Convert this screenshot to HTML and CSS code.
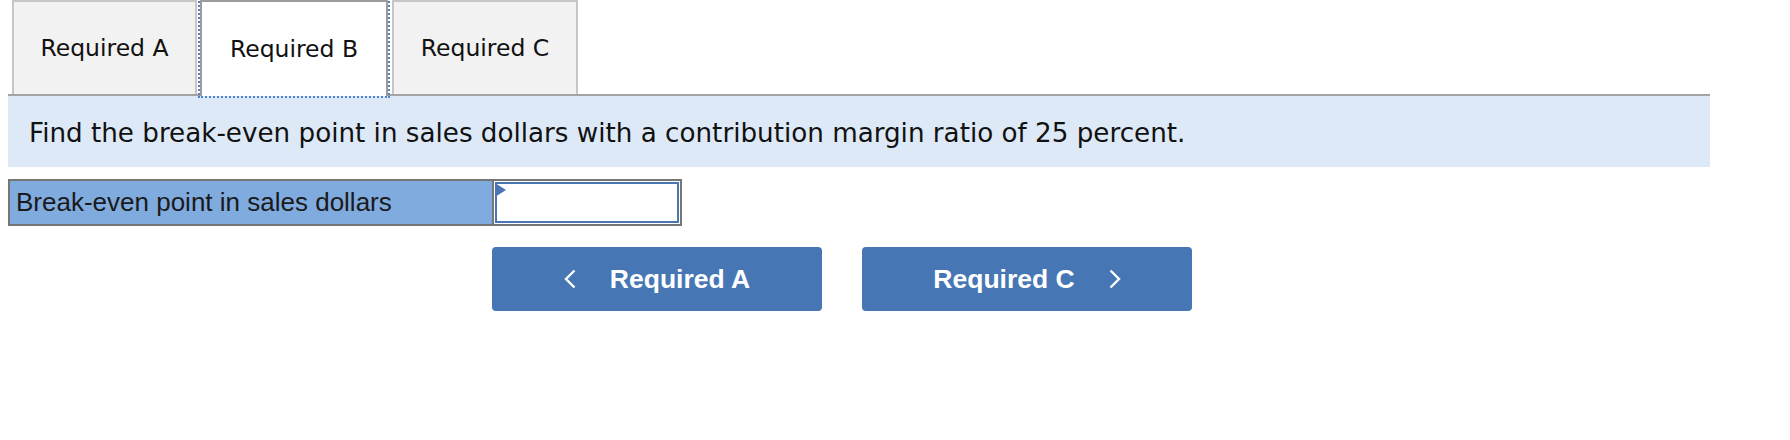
FILE: index.html
```html
<!DOCTYPE html>
<html lang="en">
<head>
<meta charset="utf-8">
<title>Required B</title>
<link rel="stylesheet" href="styles.css">
</head>
<body>
<div class="wrap">
  <div class="tabs">
    <div class="tab tab-a">Required A</div>
    <div class="tab tab-b tab-active">Required B</div>
    <div class="tab tab-c">Required C</div>
  </div>
  <div class="prompt">Find the break-even point in sales dollars with a contribution margin ratio of 25 percent.</div>
  <div class="answer-row">
    <div class="answer-label">Break-even point in sales dollars</div>
    <div class="answer-cell">
      <div class="answer-input"></div>
      <span class="marker"></span>
    </div>
  </div>
  <div class="nav">
    <div class="nav-btn">
      <svg class="chev" width="12" height="20" viewBox="0 0 12 20"><polyline points="10.5,1.5 2,10 10.5,18.5" fill="none" stroke="#fff" stroke-width="2.4"/></svg>
      <span>Required A</span>
    </div>
    <div class="nav-btn">
      <span>Required C</span>
      <svg class="chev" width="12" height="20" viewBox="0 0 12 20"><polyline points="1.5,1.5 10,10 1.5,18.5" fill="none" stroke="#fff" stroke-width="2.4"/></svg>
    </div>
  </div>
</div>
</body>
</html>
```
FILE: styles.css
```css
body {
  margin: 0;
  background: #fff;
  font-family: "DejaVu Sans", Verdana, sans-serif;
  color: #111;
}

.wrap {
  padding-left: 8px;
  width: 1702px;
}

.tabs {
  display: flex;
  padding-left: 4px;
  border-bottom: 2px solid #a4a4a4;
  height: 94px;
}

.tab {
  box-sizing: border-box;
  height: 94px;
  border: 2px solid #c6c6c6;
  border-bottom: none;
  background: #f2f2f2;
  display: flex;
  align-items: center;
  justify-content: center;
  font-size: 23.5px;
  white-space: nowrap;
}

.tab-a {
  width: 185px;
  margin-right: 3px;
}

.tab-b {
  width: 188px;
  margin-right: 4px;
}

.tab-c {
  width: 186px;
}

.tab-active {
  position: relative;
  z-index: 1;
  height: 96px;
  background: #fff;
  border-color: #9c9c9c;
  outline: 2px dotted #4f82c6;
}

.prompt {
  height: 71px;
  box-sizing: border-box;
  padding: 3px 0 0 21px;
  display: flex;
  align-items: center;
  background: #dde9f7;
  font-size: 26.2px;
  color: #111;
  white-space: nowrap;
}

.answer-row {
  margin-top: 12px;
  display: flex;
  width: 674px;
  height: 47px;
  box-sizing: border-box;
  border: 2px solid #767676;
}

.answer-label {
  width: 484px;
  box-sizing: border-box;
  border-right: 2px solid #767676;
  background: #80abdf;
  display: flex;
  align-items: center;
  padding-left: 6px;
  font-family: "Liberation Sans", Arial, sans-serif;
  font-size: 26px;
  color: #1a1a1a;
  white-space: nowrap;
}

.answer-cell {
  position: relative;
  flex: 1;
  padding: 1px;
  background: #fff;
}

.answer-input {
  box-sizing: border-box;
  width: 100%;
  height: 100%;
  border: 2px solid #4a76b4;
  background: #fff;
}

.marker {
  position: absolute;
  left: 1px;
  top: 2px;
  width: 0;
  height: 0;
  border-top: 7px solid transparent;
  border-bottom: 7px solid transparent;
  border-left: 11px solid #4a76b4;
}

.nav {
  margin-top: 21px;
  margin-left: 484px;
  display: flex;
  gap: 40px;
}

.nav-btn {
  width: 330px;
  height: 64px;
  border-radius: 4px;
  background: #4677b4;
  color: #fff;
  display: flex;
  align-items: center;
  justify-content: center;
  gap: 34px;
  font-family: "Liberation Sans", Arial, sans-serif;
  font-weight: bold;
  font-size: 26.5px;
}

.chev {
  display: block;
}
```
